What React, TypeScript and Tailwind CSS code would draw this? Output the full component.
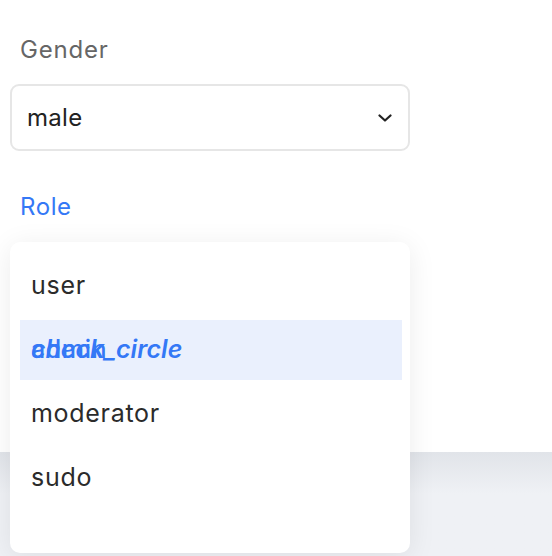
import React from 'react';

const options = ['user', 'admin', 'moderator', 'sudo'];

export default function App() {
  const selected = 'admin';

  return (
    <div
      className="relative flex w-[552px] h-[556px] flex-col overflow-hidden bg-[#eff1f5]"
      style={{ fontFamily: 'Inter, "Noto Sans", sans-serif' }}
    >
      <div className="h-[452px] shrink-0 bg-white px-[10px] pt-[32px]">
        <label className="block px-[10px] text-[24px] leading-[36px] tracking-[0.8px] text-[#666]">Gender</label>
        <div className="mt-[16px] flex h-[67px] w-[400px] items-center justify-between rounded-[9px] border-2 border-[#e6e6e6] pl-[15px] pr-[16px]">
          <span className="text-[24px] tracking-[0.3px] text-[#222]">male</span>
          <svg width="14" height="8" viewBox="0 0 14 8" fill="none">
            <path d="M1.5 1.5 L7 6.5 L12.5 1.5" stroke="#222" strokeWidth="2.2" strokeLinecap="round" strokeLinejoin="round" />
          </svg>
        </div>
        <label className="mt-[38px] block px-[10px] text-[24px] leading-[36px] tracking-[0.6px] text-[#3478f6]">Role</label>
      </div>
      <div className="flex-1 bg-linear-to-b from-[#e1e4e9] to-[#eff1f5] to-40%" />

      <ul className="absolute left-[10px] top-[242px] z-20 flex h-[311px] w-[400px] flex-col gap-[4px] rounded-[10px] bg-white pl-[10px] pr-[8px] pt-[14px] shadow-[0_4px_28px_rgba(0,0,0,0.08)]">
        {options.map((opt) => {
          const active = opt === selected;
          return (
            <li
              key={opt}
              className={
                active
                  ? 'relative flex h-[60px] items-center bg-[#eaf0fd] px-[11px] text-[25px] font-medium tracking-[0.6px] text-[#3478f6]'
                  : 'relative flex h-[60px] items-center px-[11px] text-[25px] tracking-[0.7px] text-[#2b2b2b]'
              }
            >
              {active && (
                <span className="absolute left-[11px] top-1/2 -translate-y-1/2 font-semibold italic tracking-normal">
                  check_circle
                </span>
              )}
              <span>{opt}</span>
            </li>
          );
        })}
      </ul>
    </div>
  );
}
